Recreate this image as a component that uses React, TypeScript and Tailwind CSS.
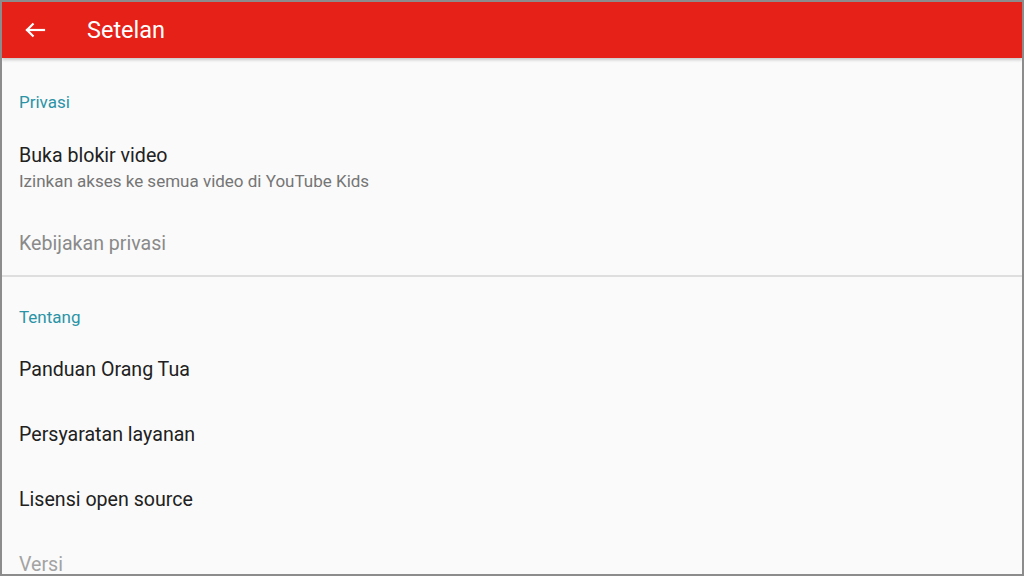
export default function App() {
  const font = { fontFamily: "Roboto, 'Noto Sans', sans-serif" };
  return (
    <div
      className="w-[1024px] h-[576px] overflow-hidden border-2 border-[#8c8c8c] bg-[#fafafa] flex flex-col"
      style={font}
    >
      <div className="h-[56px] shrink-0 bg-[#e62117] flex items-center shadow-[0_2px_3px_rgba(0,0,0,0.2)] relative z-10">
        <div className="w-[85px] pl-[22px] flex items-center">
          <svg width="22" height="18" viewBox="0 0 22 18" fill="none" stroke="white" strokeWidth="2.2" strokeLinecap="square">
            <path d="M20 9 H3" />
            <path d="M9.5 2.5 L3 9 L9.5 15.5" strokeLinecap="butt" />
          </svg>
        </div>
        <div className="text-white text-[23.5px] leading-[28px]">Setelan</div>
      </div>
      <div className="flex flex-col">
        <div className="pl-[17px] pt-[34px] text-[17px] leading-[20px] text-[#2a93a6]">Privasi</div>
        <div className="pl-[17px] pt-[34px]">
          <div className="text-[19.6px] leading-[20px] text-[#212121]">Buka blokir video</div>
          <div className="mt-[5px] text-[17px] leading-[20px] text-[#757575]">Izinkan akses ke semua video di YouTube Kids</div>
        </div>
        <div className="pl-[17px] pt-[41px] pb-[19px] text-[19.6px] leading-[24px] text-[#8a8a8a]">Kebijakan privasi</div>
        <div className="h-[2px] bg-[#dedede]" />
        <div className="pl-[17px] pt-[30px] pb-[10px] text-[17px] leading-[20px] text-[#2a93a6]">Tentang</div>
        <div className="pl-[17px] h-[65px] flex items-center text-[19.6px] text-[#212121]">Panduan Orang Tua</div>
        <div className="pl-[17px] h-[65px] flex items-center text-[19.6px] text-[#212121]">Persyaratan layanan</div>
        <div className="pl-[17px] h-[65px] flex items-center text-[19.6px] text-[#212121]">Lisensi open source</div>
        <div className="pl-[17px] h-[65px] flex items-center text-[19.6px] text-[#a3a3a3]">Versi</div>
      </div>
    </div>
  );
}
